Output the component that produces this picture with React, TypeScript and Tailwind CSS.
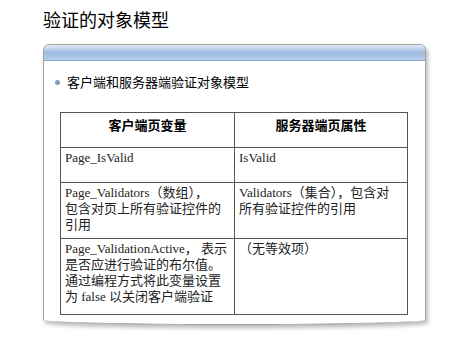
const serif = "font-['Liberation_Serif','Noto_Sans_CJK_SC',serif]";

const rows = [
  { left: ["Page_IsValid"], right: ["IsValid"], h: "h-[35px]" },
  {
    left: ["Page_Validators（数组），", "包含对页上所有验证控件的", "引用"],
    right: ["Validators（集合），包含对", "所有验证控件的引用"],
    h: "h-[56px]",
  },
  {
    left: [
      "Page_ValidationActive， 表示",
      "是否应进行验证的布尔值。",
      "通过编程方式将此变量设置",
      "为 false 以关闭客户端验证",
    ],
    right: ["（无等效项）"],
    h: "h-[76px]",
  },
];

export default function App() {
  return (
    <div className="relative h-[355px] w-[474px] overflow-hidden bg-white font-['Noto_Sans_CJK_SC',sans-serif]">
      <h1 className="pl-[43px] pt-[7px] text-[18px] leading-[24px] font-normal text-black">
        验证的对象模型
      </h1>

      <div className="mt-[13px] ml-[43px] h-[281px] w-[383px] rounded-t-[6px] rounded-b-[50%_5px] border border-[#a3a3a3] bg-white shadow-[2px_3px_4px_rgba(0,0,0,0.28)]">
        <div className="h-[16px] rounded-t-[5px] border-b border-[#8aa6c8] bg-gradient-to-b from-[#e4edf7] via-[#9dbbe2] to-[#b9cee8]" />

        <div className="mt-[12px] flex items-center pl-[11px]">
          <span className="h-[5px] w-[5px] rounded-full bg-[#7f9cc0]" />
          <span className="ml-[7px] text-[13px] leading-[18px] font-normal text-black">
            客户端和服务器端验证对象模型
          </span>
        </div>

        <table className="mt-[21px] ml-[16px] w-[348px] table-fixed border-collapse">
          <thead>
            <tr>
              <th className="h-[35px] w-[174px] border border-[#555] pt-[4px] align-top text-[13px] leading-[16px] font-bold text-black">
                客户端页变量
              </th>
              <th className="h-[35px] border border-[#555] pt-[4px] align-top text-[13px] leading-[16px] font-bold text-black">
                服务器端页属性
              </th>
            </tr>
          </thead>
          <tbody>
            {rows.map((r) => (
              <tr key={r.right[0]}>
                <td className={`${r.h} border border-[#555] px-[4px] pt-[2px] align-top text-[13px] leading-[16px] whitespace-pre text-[#222] ${serif}`}>
                  {r.left.map((l) => (
                    <div key={l}>{l}</div>
                  ))}
                </td>
                <td className={`${r.h} border border-[#555] px-[4px] pt-[2px] align-top text-[13px] leading-[16px] whitespace-pre text-[#222] ${serif}`}>
                  {r.right.map((l) => (
                    <div key={l}>{l}</div>
                  ))}
                </td>
              </tr>
            ))}
          </tbody>
        </table>
      </div>
    </div>
  );
}
